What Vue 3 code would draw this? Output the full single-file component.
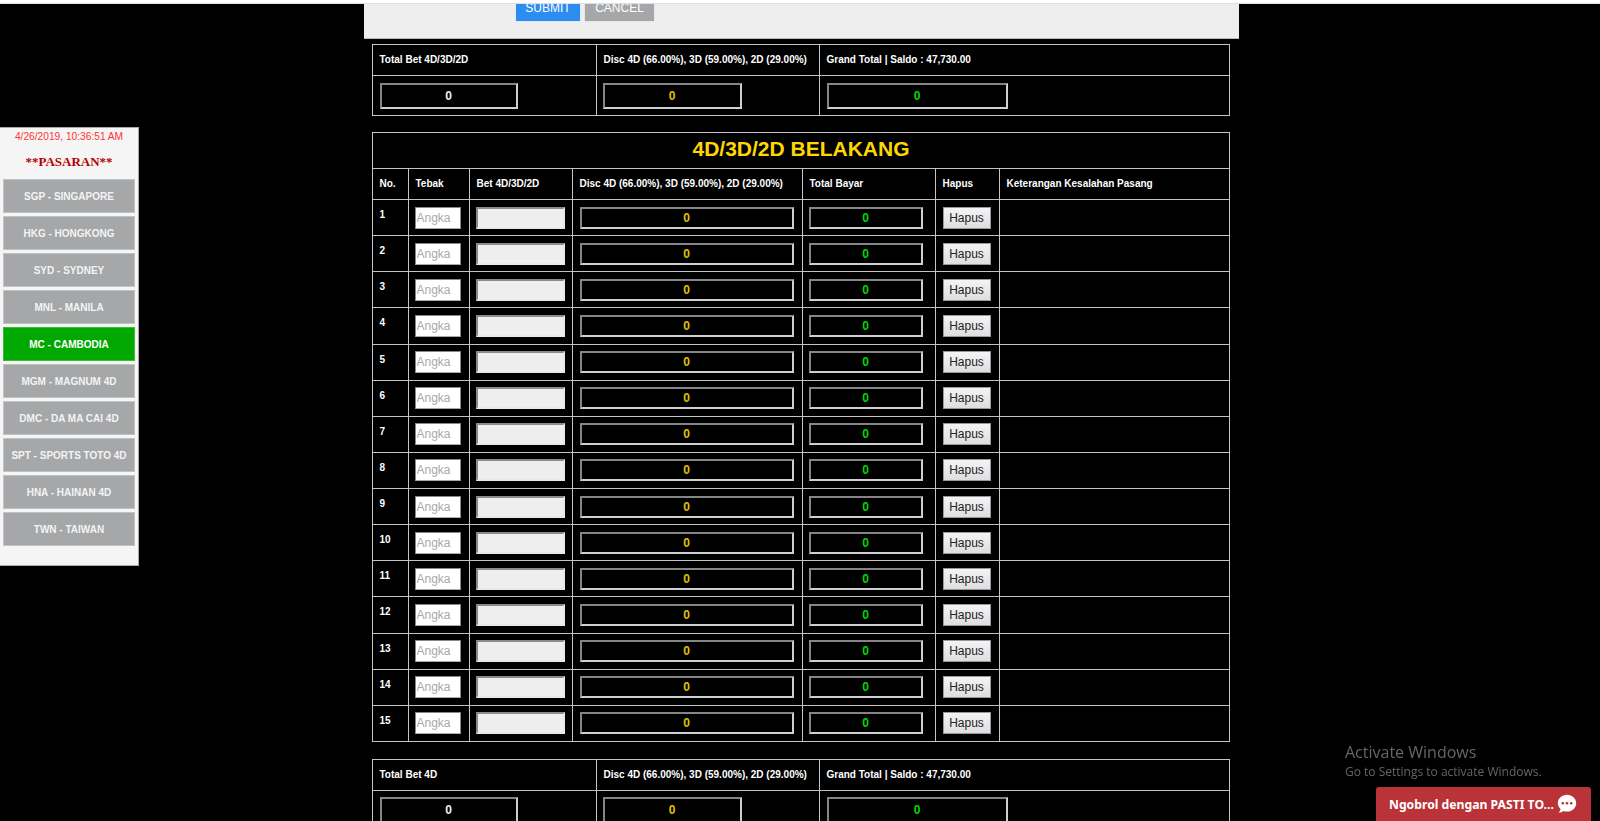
<script setup>
const markets = [
  { label: 'SGP - SINGAPORE' },
  { label: 'HKG - HONGKONG' },
  { label: 'SYD - SYDNEY' },
  { label: 'MNL - MANILA' },
  { label: 'MC - CAMBODIA', active: true },
  { label: 'MGM - MAGNUM 4D' },
  { label: 'DMC - DA MA CAI 4D' },
  { label: 'SPT - SPORTS TOTO 4D' },
  { label: 'HNA - HAINAN 4D' },
  { label: 'TWN - TAIWAN' },
]
const rows = Array.from({ length: 15 }, (_, i) => i + 1)
const disc = 'Disc 4D (66.00%), 3D (59.00%), 2D (29.00%)'
const totals = [
  { first: 'Total Bet 4D/3D/2D', cls: 'sum-top' },
  { first: 'Total Bet 4D', cls: 'sum-bottom' },
]
</script>

<template>
  <div class="page">
    <div class="strip"></div>
    <main class="main">
      <div class="panel">
        <button class="action submit">SUBMIT</button>
        <button class="action cancel">CANCEL</button>
      </div>

      <table class="grid sum sum-top">
        <colgroup><col class="s1" /><col class="s2" /><col /></colgroup>
        <tbody>
          <tr class="sum-head">
            <th>{{ totals[0].first }}</th>
            <th>{{ disc }}</th>
            <th>Grand Total | Saldo : 47,730.00</th>
          </tr>
          <tr class="sum-row">
            <td><input class="out w-white wide-a" readonly value="0" /></td>
            <td><input class="out w-yellow wide-c" readonly value="0" /></td>
            <td><input class="out w-green wide-b" readonly value="0" /></td>
          </tr>
        </tbody>
      </table>

      <table class="grid bets">
        <colgroup>
          <col class="c1" /><col class="c2" /><col class="c3" /><col class="c4" />
          <col class="c5" /><col class="c6" /><col />
        </colgroup>
        <thead>
          <tr class="title-row"><th colspan="7" class="title">4D/3D/2D BELAKANG</th></tr>
          <tr class="head-row">
            <th>No.</th>
            <th>Tebak</th>
            <th>Bet 4D/3D/2D</th>
            <th>{{ disc }}</th>
            <th>Total Bayar</th>
            <th>Hapus</th>
            <th>Keterangan Kesalahan Pasang</th>
          </tr>
        </thead>
        <tbody>
          <tr v-for="n in rows" :key="n" class="bet-row">
            <td class="num">{{ n }}</td>
            <td><input class="guess" placeholder="Angka" /></td>
            <td><input class="bet" /></td>
            <td><input class="out w-yellow fill" readonly value="0" /></td>
            <td><input class="out w-green pay" readonly value="0" /></td>
            <td><button class="del">Hapus</button></td>
            <td></td>
          </tr>
        </tbody>
      </table>

      <table class="grid sum sum-bottom">
        <colgroup><col class="s1" /><col class="s2" /><col /></colgroup>
        <tbody>
          <tr class="sum-head">
            <th>{{ totals[1].first }}</th>
            <th>{{ disc }}</th>
            <th>Grand Total | Saldo : 47,730.00</th>
          </tr>
          <tr class="sum-row">
            <td><input class="out w-white wide-a" readonly value="0" /></td>
            <td><input class="out w-yellow wide-c" readonly value="0" /></td>
            <td><input class="out w-green wide-b" readonly value="0" /></td>
          </tr>
        </tbody>
      </table>
    </main>

    <aside class="side">
      <div class="clock">4/26/2019, 10:36:51 AM</div>
      <div class="side-title">**PASARAN**</div>
      <nav class="markets">
        <a v-for="m in markets" :key="m.label" class="market" :class="{ on: m.active }">{{ m.label }}</a>
      </nav>
    </aside>

    <div class="activate">
      <div class="a1">Activate Windows</div>
      <div class="a2">Go to Settings to activate Windows.</div>
    </div>

    <div class="chat">
      <span>Ngobrol dengan PASTI TO...</span>
      <svg width="20" height="20" viewBox="0 0 20 20">
        <path d="M10 .8c5 0 9.2 3.7 9.2 8.4s-4.2 8.4-9.2 8.4c-1.2 0-2.400-.2-3.500-.6-1.300 1-3 1.700-4.800 1.800.9-1 1.600-2.300 1.900-3.700C1.900 13.100.8 11.200.8 9.200.8 4.500 5 .8 10 .8z" fill="#fff" />
        <circle cx="5.800" cy="9.200" r="1.300" fill="#b93339" />
        <circle cx="10" cy="9.200" r="1.300" fill="#b93339" />
        <circle cx="14.200" cy="9.200" r="1.300" fill="#b93339" />
      </svg>
    </div>
  </div>
</template>

<style scoped>
.page {
  height: 821px;
  overflow: hidden;
  background: #000;
  font-family: "Liberation Sans", Arial, sans-serif;
  color: #fff;
}
.strip {
  height: 4px;
  background: #fff;
  border-bottom: 1px solid #dcdfe3;
  box-sizing: border-box;
}
.main {
  margin-left: 364px;
  width: 875px;
}
.panel {
  height: 35px;
  box-sizing: border-box;
  background: #eee;
  border-bottom: 1px solid #bbb;
  overflow: hidden;
  display: flex;
  align-items: flex-end;
  gap: 3px;
  padding: 0 0 16px 151px;
}
.action {
  flex: none;
  height: 28px;
  border: 1px solid #e4e8ec;
  border-radius: 0;
  color: #fff;
  font: 12px "Liberation Sans", Arial, sans-serif;
  padding: 0;
  margin: 0;
}
.submit { width: 66px; background: #2d8cf0; }
.cancel { width: 71px; background: #a5a7a8; }

.grid {
  border-collapse: collapse;
  table-layout: fixed;
  width: 858px;
  margin-left: 8px;
  background: #000;
}
.grid th,
.grid td {
  border: 1px solid #c4c4c4;
  padding: 0 6.5px;
  text-align: left;
  vertical-align: middle;
  font-size: 10px;
  font-weight: 700;
  line-height: 12px;
  white-space: nowrap;
  overflow: hidden;
}
.sum { margin-top: 5px; }
.sum-bottom { margin-top: 17px; }
.bets { margin-top: 16px; }
.s1 { width: 224px; }
.s2 { width: 223px; }
.c1 { width: 36px; }
.c2 { width: 61px; }
.c3 { width: 103px; }
.c4 { width: 230px; }
.c5 { width: 133px; }
.c6 { width: 64px; }

.sum-head { height: 31px; }
.sum-row { height: 40px; }
.title-row { height: 36px; }
.head-row { height: 31px; }
.bet-row { height: 36.13px; }
.grid .title {
  text-align: center;
  font-size: 21px;
  line-height: 24px;
  padding-bottom: 4px;
  color: #ffd700;
}
.grid .num {
  vertical-align: top;
  padding-top: 9px;
}

input {
  display: block;
  box-sizing: border-box;
  margin: 0;
  outline: none;
  font-family: "Liberation Sans", Arial, sans-serif;
}
.out {
  background: #000;
  height: 26px;
  border: 2px solid;
  border-color: #858585 #cfcfcf #cfcfcf #858585;
  text-align: center;
  font-size: 12px;
  font-weight: 700;
  padding: 0;
}
.bet-row .out { height: 22px; }
.w-white { color: #eee; }
.w-yellow { color: #e0c000; }
.w-green { color: #00d800; }
.wide-a { width: 138px; }
.wide-b { width: 181px; }
.wide-c { width: 139px; margin-left: -1px; }
.fill { width: 214px; }
.pay { width: 114px; margin-left: -1px; }
.guess {
  width: 46px;
  height: 22px;
  margin-left: -1px;
  border: 1px solid #888;
  border-bottom-color: #aaa;
  background: #fff;
  font-size: 12px;
  font-weight: 400;
  padding: 0 1px;
}
.guess::placeholder { color: #a9a9a9; opacity: 1; }
.bet {
  width: 89px;
  height: 22px;
  margin-left: -1px;
  background: #eee;
  border: 2px solid;
  border-color: #8a8a8a #e8e8e8 #e8e8e8 #8a8a8a;
  padding: 0;
}
.del {
  display: block;
  box-sizing: border-box;
  width: 48px;
  height: 22px;
  margin: 0;
  padding: 0;
  border: 1px solid #999;
  border-radius: 0;
  background: linear-gradient(#f4f4f4, #dedede);
  color: #222;
  font: 12px "Liberation Sans", Arial, sans-serif;
}

.side {
  position: fixed;
  left: 0;
  top: 127px;
  width: 139px;
  height: 439px;
  box-sizing: border-box;
  background: #f5f5f5;
  border: 1px solid #aaa;
  border-left: 0;
  padding: 0 3px 0 3px;
}
.clock {
  margin: 0 -3px;
  text-align: center;
  color: #f33;
  font-size: 10.2px;
  line-height: 14px;
  padding-top: 2px;
}
.side-title {
  margin: 8px -3px 7px;
  text-align: center;
  font-family: "Liberation Serif", "Times New Roman", serif;
  font-size: 13px;
  font-weight: 700;
  line-height: 20px;
  color: #b80000;
}
.markets {
  display: flex;
  flex-direction: column;
  gap: 3px;
}
.market {
  display: flex;
  align-items: center;
  justify-content: center;
  height: 34px;
  width: 132px;
  box-sizing: border-box;
  background: #a5a7a8;
  border: 1px solid #c2c3c4;
  color: #f4f4f4;
  font-size: 10px;
  font-weight: 700;
  white-space: nowrap;
}
.market.on {
  background: #00a800;
  border-color: #3dbb3d;
  color: #fff;
}

.activate {
  position: fixed;
  left: 1345px;
  top: 741px;
  color: #666;
  font-family: "Open Sans", "Noto Sans", sans-serif;
}
.a1 { font-size: 16px; line-height: 22px; }
.a2 { font-size: 12px; line-height: 18px; }

.chat {
  position: fixed;
  left: 1376px;
  top: 787px;
  width: 215px;
  height: 34px;
  box-sizing: border-box;
  padding: 0 14px 0 13px;
  display: flex;
  align-items: center;
  justify-content: space-between;
  background: #b93339;
  border-radius: 3px 3px 0 0;
  color: #fff;
  font-family: "Noto Sans", "Open Sans", sans-serif;
  font-size: 12.2px;
  font-weight: 700;
  white-space: nowrap;
}
</style>

<style>
html, body {
  margin: 0;
  background: #000;
  overflow: hidden;
}
</style>
